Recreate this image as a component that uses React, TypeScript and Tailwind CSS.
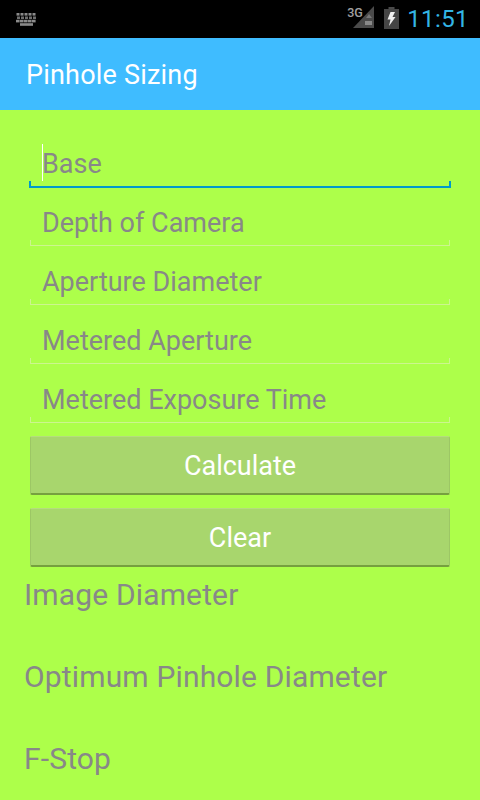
const font = { fontFamily: "Roboto, sans-serif" };

function Field({ label, focused }: { label: string; focused?: boolean }) {
  return (
    <div className="relative flex h-[59px] items-center pl-3 pt-[12px] text-[27px] leading-none text-[#888888]">
      {focused && <div className="absolute left-3 top-[15px] h-[37px] w-px bg-white" />}
      <span>{label}</span>
      {focused ? (
        <>
          <div className="absolute bottom-0 left-[-1px] right-[-1px] h-[2px] bg-[#0099cc]" />
          <div className="absolute bottom-0 left-[-1px] h-[7px] w-[2px] bg-[#0099cc]" />
          <div className="absolute bottom-0 right-[-1px] h-[7px] w-[2px] bg-[#0099cc]" />
        </>
      ) : (
        <>
          <div className="absolute bottom-[1px] left-0 right-0 h-px bg-[#ccf58f]" />
          <div className="absolute bottom-[1px] left-0 h-[6px] w-px bg-[#ccf58f]" />
          <div className="absolute bottom-[1px] right-0 h-[6px] w-px bg-[#ccf58f]" />
        </>
      )}
    </div>
  );
}

function Btn({ label }: { label: string }) {
  return (
    <button className="flex h-[59px] w-full items-center justify-center rounded-[2px] border-x border-t border-x-[#9cc765] border-t-[#b5dd7e] border-b-2 border-b-[#76a03f] bg-[#a8d66d] pt-[2px] text-[27px] leading-none text-white">
      {label}
    </button>
  );
}

function Keyboard() {
  return (
    <svg width="22" height="13" viewBox="0 0 22 13" className="block">
      <g fill="#8a8a8a">
        {[0, 4, 8, 12, 16].map((x) => <rect key={"a" + x} x={x + 0.5} y="0" width="3" height="2.6" />)}
        {[0, 4, 8, 12, 16].map((x) => <rect key={"b" + x} x={x + 1} y="3.5" width="3" height="2.6" opacity="0.8" />)}
        {[0, 4, 8, 12, 16].map((x) => <rect key={"c" + x} x={x} y="6.8" width="3.6" height="2.6" />)}
        <rect x="4" y="10.2" width="13" height="2.6" />
      </g>
    </svg>
  );
}

export default function App() {
  return (
    <div className="flex h-[800px] w-[480px] flex-col overflow-hidden bg-[#adff4a]" style={font}>
      <div className="flex h-[38px] shrink-0 items-center bg-black pl-4 pr-[11px]">
        <Keyboard />
        <div className="ml-auto flex items-center">
          <div className="relative h-[30px] w-[28px]">
            <svg width="22" height="23" viewBox="0 0 22 23" className="absolute left-[6px] top-[2px]">
              <polygon points="21,0 21,22 0,22" fill="#4a4a4a" />
              <polygon points="16,8 19,12 13,12" fill="#777" />
              <rect x="12" y="15" width="7" height="4" fill="#888" />
            </svg>
            <span className="absolute left-0 top-[3px] text-[12.5px] font-medium leading-none text-[#a0a0a0]">3G</span>
          </div>
          <svg width="15" height="22" viewBox="0 0 15 22" className="mb-[2px] ml-[9px]">
            <rect x="4.5" y="0" width="6" height="2" fill="#4a4a4a" />
            <rect x="0" y="2" width="15" height="20" fill="#454545" />
            <polygon points="6.5,5 11,5 8.5,10 11.5,10 5,19 6.5,12.5 3.5,12.5" fill="#eeeeee" />
          </svg>
          <span className="ml-[8px] text-[24px] leading-none tracking-[0.4px] text-[#33b5e5]">11:51</span>
        </div>
      </div>
      <div className="flex h-[72px] shrink-0 items-center bg-[#3fbcff] pl-[26px] pt-[2px] text-[27px] leading-none tracking-[0.2px] text-white">
        Pinhole Sizing
      </div>
      <div className="flex-1 px-[24px] pt-[19px]">
        <div className="mx-[6px]">
          <Field label="Base" focused />
          <Field label="Depth of Camera" />
          <Field label="Aperture Diameter" />
          <Field label="Metered Aperture" />
          <Field label="Metered Exposure Time" />
          <div className="mt-[12px] flex flex-col gap-[13px]">
            <Btn label="Calculate" />
            <Btn label="Clear" />
          </div>
        </div>
        <div className="mt-[8px] flex flex-col text-[30px] leading-none tracking-[0.15px] text-[#888888]">
          <div className="flex h-[40px] items-center">Image Diameter</div>
          <div className="mt-[42px] flex h-[40px] items-center">Optimum Pinhole Diameter</div>
          <div className="mt-[42px] flex h-[40px] items-center">F-Stop</div>
        </div>
      </div>
    </div>
  );
}
